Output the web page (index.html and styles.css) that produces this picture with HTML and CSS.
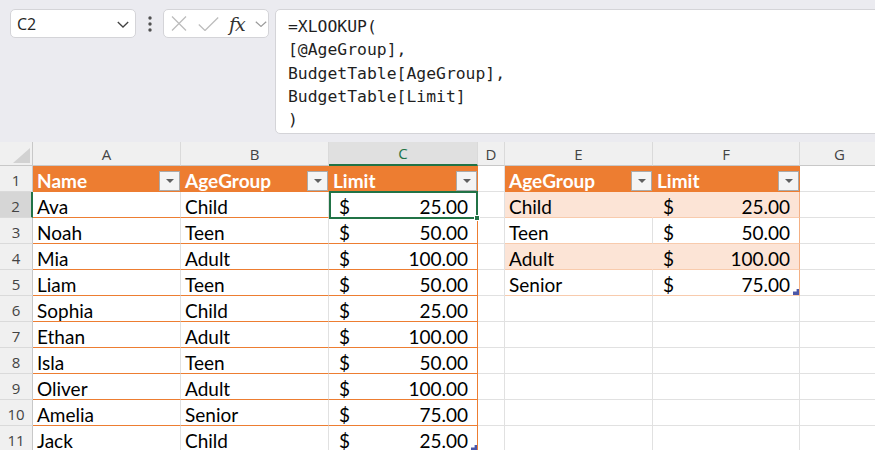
FILE: index.html
```html
<!DOCTYPE html>
<html lang="en">
<head>
    <meta charset="UTF-8">
    <meta name="viewport" content="width=device-width, initial-scale=1.0">
    <title>Budget Lookup</title>
    <link rel="stylesheet" href="styles.css">
</head>
<body>
    <div class="toolbar">
        <div class="name-box">
            <span>C2</span>
            <svg class="chev" width="12" height="7" viewBox="0 0 12 7"><path d="M0.8 1l5.2 5 5.2-5" fill="none" stroke="#424242" stroke-width="1.3"/></svg>
        </div>
        <div class="more">
            <svg width="4" height="16" viewBox="0 0 4 16"><circle cx="2" cy="2" r="1.7"/><circle cx="2" cy="8" r="1.7"/><circle cx="2" cy="14" r="1.7"/></svg>
        </div>
        <div class="fx-buttons">
            <svg class="cancel" width="16" height="15" viewBox="0 0 16 15"><path d="M1 0.5l14 14M15 0.5l-14 14" fill="none" stroke="#bdbdbd" stroke-width="1.3"/></svg>
            <svg class="enter" width="21" height="14" viewBox="0 0 21 14"><path d="M0.8 7.5l6.2 6 13.2-13" fill="none" stroke="#bdbdbd" stroke-width="1.3"/></svg>
            <span class="fx">fx</span>
            <svg class="chev-small" width="12" height="6" viewBox="0 0 12 6"><path d="M0.8 0.8l5.2 4.6 5.2-4.6" fill="none" stroke="#9a9a9a" stroke-width="1.2"/></svg>
        </div>
        <div class="formula">=XLOOKUP(
[@AgeGroup],
BudgetTable[AgeGroup],
BudgetTable[Limit]
)</div>
    </div>

    <div class="sheet" id="sheet"></div>

    <script>
        const people = [
            ['Ava', 'Child', 25], ['Noah', 'Teen', 50], ['Mia', 'Adult', 100],
            ['Liam', 'Teen', 50], ['Sophia', 'Child', 25], ['Ethan', 'Adult', 100],
            ['Isla', 'Teen', 50], ['Oliver', 'Adult', 100], ['Amelia', 'Senior', 75],
            ['Jack', 'Child', 25]
        ];
        const budget = [['Child', 25], ['Teen', 50], ['Adult', 100], ['Senior', 75]];
        const sheet = document.getElementById('sheet');

        function cell(cls, html) {
            const div = document.createElement('div');
            div.className = cls;
            if (html !== undefined) div.innerHTML = html;
            sheet.appendChild(div);
        }
        const money = v => `<span>$</span><span>${v.toFixed(2)}</span>`;
        const head = t => `<span>${t}</span><span class="filter"></span>`;

        // column letters
        cell('corner', '<span class="select-all"></span>');
        ['A', 'B', 'C', 'D', 'E', 'F', 'G'].forEach(c => cell(c === 'C' ? 'col-head on' : 'col-head', c));

        // row 1: table headers
        cell('row-head', 1);
        cell('cell th', head('Name'));
        cell('cell th', head('AgeGroup'));
        cell('cell th', head('Limit'));
        cell('cell');
        cell('cell th', head('AgeGroup'));
        cell('cell th', head('Limit'));
        cell('cell');

        people.forEach(([name, group, limit], i) => {
            const row = i + 2;
            cell(row === 2 ? 'row-head on' : 'row-head', row);
            cell('cell t1', name);
            cell('cell t1', group);
            let cls = 'cell t1 money end';
            if (row === 2) cls += ' sel';
            if (i === people.length - 1) cls += ' grip';
            cell(cls, money(limit));
            cell('cell');

            const b = budget[i];
            if (b) {
                const band = i % 2 === 0 ? ' band' : '';
                const grip = i === budget.length - 1 ? ' grip' : '';
                cell('cell t2' + band, b[0]);
                cell('cell t2 money end' + band + grip, money(b[1]));
            } else {
                cell('cell');
                cell('cell');
            }
            cell('cell');
        });
    </script>
</body>
</html>
```

FILE: styles.css
```css
html, body {
    margin: 0;
    overflow: hidden;
}
body {
    background-color: #ebebf0;
    font-family: "Open Sans", "Noto Sans", sans-serif;
    color: #242424;
}

/* formula bar */
.toolbar {
    display: flex;
    align-items: flex-start;
    padding: 9px 0 8px 10px;
    height: 125px;
}
.name-box {
    box-sizing: border-box;
    width: 126px;
    height: 29px;
    background: white;
    border: 1px solid #d4d4d8;
    border-radius: 5px;
    display: flex;
    align-items: center;
    justify-content: space-between;
    padding: 0 6px 0 6px;
    font-size: 16px;
}
.name-box .chev {
    margin-top: 1px;
}
.more {
    width: 27px;
    height: 29px;
    display: flex;
    align-items: center;
    justify-content: center;
    fill: #505050;
}
.fx-buttons {
    box-sizing: border-box;
    width: 106px;
    height: 29px;
    background: white;
    border: 1px solid #d4d4d8;
    border-radius: 5px;
    display: flex;
    align-items: center;
    padding-left: 7px;
}
.fx-buttons .enter {
    margin-left: 11px;
}
.fx {
    margin-left: 10px;
    width: 19px;
    font-family: "DejaVu Serif", "Liberation Serif", serif;
    font-style: italic;
    font-size: 19px;
    line-height: 20px;
    letter-spacing: -1px;
    color: #333;
}
.fx-buttons .chev-small {
    margin-left: 7px;
}
.formula {
    box-sizing: border-box;
    flex: 1;
    height: 125px;
    margin-left: 6px;
    margin-right: -10px;
    background: white;
    border: 1px solid #d4d4d8;
    border-radius: 5px;
    padding: 5px 12px;
    white-space: pre;
    font-family: "DejaVu Sans Mono", "Liberation Mono", monospace;
    font-size: 16.4px;
    line-height: 23.3px;
    color: #1f1f1f;
}

/* grid */
.sheet {
    display: grid;
    grid-template-columns: 33px 148px 148px 149px 27px 148px 147px 80px;
    grid-template-rows: 24px repeat(11, 26px);
    background: white;
}
.sheet > div {
    box-sizing: border-box;
}
.corner {
    background: #f0f0f0;
    border-right: 1px solid #c8c8c8;
    border-bottom: 1px solid #c8c8c8;
    display: flex;
    align-items: flex-end;
    justify-content: flex-end;
    padding: 0 2px 2px 0;
}
.select-all {
    width: 17px;
    height: 15px;
    background: #d2d2d2;
    clip-path: polygon(100% 0, 100% 100%, 0 100%);
}
.col-head,
.row-head {
    background: #f0f0f0;
    color: #444;
    font-size: 15px;
    display: flex;
    align-items: center;
    justify-content: center;
}
.col-head {
    border-right: 1px solid #dadada;
    border-bottom: 1px solid #c8c8c8;
}
.row-head {
    border-right: 1px solid #c8c8c8;
    border-bottom: 1px solid #dadada;
    padding-top: 2px;
}
.col-head.on {
    background: #e0e0e0;
    color: #217346;
    border-bottom: 2px solid #217346;
}
.row-head.on {
    background: #d6d6d6;
    border-right: 2px solid #217346;
}

.cell {
    background: white;
    border-right: 1px solid #e1e1e1;
    border-bottom: 1px solid #e1e1e1;
    display: flex;
    align-items: flex-end;
    padding: 0 4px;
    font-family: Lato, "Liberation Sans", sans-serif;
    font-size: 19px;
    line-height: 20px;
    color: #000;
    white-space: nowrap;
}
.money {
    justify-content: space-between;
    padding: 0 9px 0 10px;
}
.th {
    background: #ed7d31;
    color: white;
    font-weight: bold;
    border-right-color: #ed7d31;
    border-bottom-color: #ed7d31;
    justify-content: space-between;
    padding-right: 0;
}
.filter {
    box-sizing: border-box;
    width: 21px;
    height: 20px;
    background: #f4f4f4;
    border: 1px solid #aaaaaa;
    display: flex;
    align-items: center;
    justify-content: center;
}
.filter::after {
    content: '';
    border-left: 4px solid transparent;
    border-right: 4px solid transparent;
    border-top: 4px solid #606060;
}
.t1 {
    border-bottom-color: #ed7d31;
}
.t1.end {
    border-right-color: #ed7d31;
}
.t2 {
    border-bottom-color: #f8cbad;
}
.t2.band {
    background: #fce4d6;
    border-right-color: #fce4d6;
}
.t2.end {
    border-right-color: #f4b084;
}

/* active cell */
.sel {
    position: relative;
}
.sel::after {
    content: '';
    position: absolute;
    left: 0;
    top: -1px;
    right: -1px;
    bottom: -2px;
    border: 2px solid #217346;
}
.sel::before {
    content: '';
    position: absolute;
    right: -3px;
    bottom: -4px;
    width: 4px;
    height: 4px;
    background: #217346;
    border: 1px solid white;
    z-index: 1;
}

/* table resize handle */
.grip {
    position: relative;
}
.grip::after {
    content: '';
    position: absolute;
    right: 0;
    bottom: 0;
    width: 6px;
    height: 6px;
    background: #4b57a8;
    clip-path: polygon(100% 0, 100% 100%, 0 100%, 0 40%, 60% 40%, 60% 0);
}
```
